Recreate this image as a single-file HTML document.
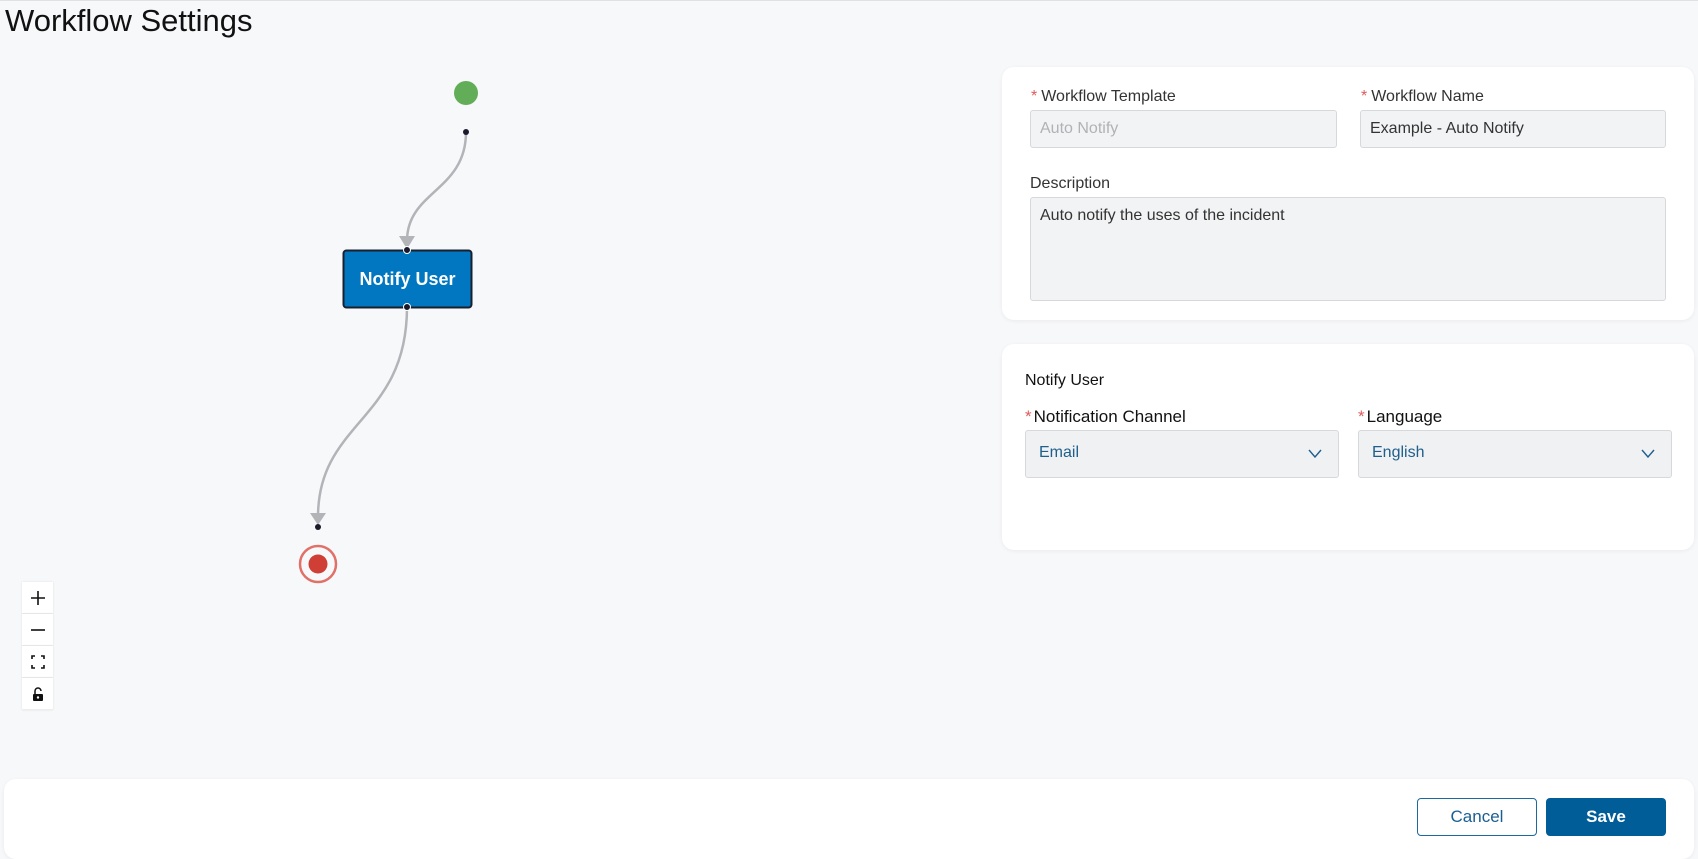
<!DOCTYPE html>
<html><head><style>
*{box-sizing:border-box;margin:0;padding:0}
body{width:1698px;height:840px;background:#f7f8fa;font-family:"Liberation Sans",sans-serif;position:relative;overflow:hidden;border-top:1px solid #dfe1e4;color:#222}
.a{position:absolute}
h1{position:absolute;left:5px;top:2px;font-size:31px;font-weight:400;color:#111}
.card{position:absolute;background:#fff;border-radius:12px;box-shadow:0 1px 4px rgba(0,0,0,0.06)}
.lbl{position:absolute;font-size:16px;color:#333}
.lbl b{color:#e05a5a;font-weight:400;margin-right:4px}
.inp{position:absolute;background:#f2f3f5;border:1px solid #d6d8db;border-radius:3px;font-size:16px;color:#333;padding:9px 9px}
.sel{position:absolute;background:#f0f1f3;border:1px solid #d6d8db;border-radius:3px;font-size:16px;color:#1e5f8c;padding:13px 13px}
.ctl{position:absolute;left:22px;width:31px;height:32px;background:#fff;border-bottom:1px solid #eee;box-shadow:0 0 2px rgba(0,0,0,0.1);display:flex;align-items:center;justify-content:center}
.btn{position:absolute;top:797px;width:120px;height:38px;border-radius:4px;font-size:17px;display:flex;align-items:center;justify-content:center}
</style></head><body>
<h1>Workflow Settings</h1>
<svg class="a" style="left:0;top:0" width="900" height="720">
<circle cx="466" cy="92" r="12" fill="#62ad58"/>
<path d="M466 131 C466 190 407 190 407 240" stroke="#b3b4b8" stroke-width="2.5" fill="none"/>
<path d="M399 235 L415 235 L407 248 Z" fill="#b3b4b8"/>
<path d="M407 306 C407 420 318 420 318 516" stroke="#b3b4b8" stroke-width="2.5" fill="none"/>
<path d="M310 512 L326 512 L318 524 Z" fill="#b3b4b8"/>
<circle cx="466" cy="131" r="3" fill="#1a1a2a"/>
<circle cx="318" cy="526" r="3" fill="#1a1a2a"/>
<circle cx="318" cy="563" r="18" fill="none" stroke="#e07068" stroke-width="2.5"/>
<circle cx="318" cy="563" r="9.5" fill="#cf3f35"/>
<rect x="343.5" y="249.5" width="128" height="57" rx="3" fill="#0077c0" stroke="#1a1f2e" stroke-width="2"/>
<text x="407.5" y="284" text-anchor="middle" font-family="Liberation Sans" font-weight="700" font-size="18" fill="#fff">Notify User</text>
<circle cx="407" cy="249" r="3.5" fill="#1a1a2a" stroke="#fff" stroke-width="1"/>
<circle cx="407" cy="306" r="3.5" fill="#1a1a2a" stroke="#fff" stroke-width="1"/>
</svg>
<div class="ctl" style="top:581px"><svg width="16" height="16"><path d="M8 1V15M1 8H15" stroke="#111" stroke-width="1.6"/></svg></div>
<div class="ctl" style="top:613px"><svg width="16" height="16"><path d="M1 8H15" stroke="#111" stroke-width="1.6"/></svg></div>
<div class="ctl" style="top:645px"><svg width="16" height="16"><path d="M2 5V2H5M11 2H14V5M14 11V14H11M5 14H2V11" stroke="#111" stroke-width="1.6" fill="none"/></svg></div>
<div class="ctl" style="top:677px"><svg width="16" height="16"><path d="M5 8V5a3 3 0 0 1 6 0" stroke="#111" stroke-width="1.5" fill="none"/><rect x="3" y="8" width="10" height="7" rx="1" fill="#111"/><circle cx="8" cy="11.5" r="1.2" fill="#fff"/></svg></div>

<div class="card" style="left:1002px;top:66px;width:692px;height:253px"></div>
<div class="lbl" style="left:1031px;top:87px"><b>*</b>Workflow Template</div>
<div class="lbl" style="left:1361px;top:87px"><b>*</b>Workflow Name</div>
<div class="inp" style="left:1030px;top:109px;width:307px;height:38px;color:#b0b2b5">Auto Notify</div>
<div class="inp" style="left:1360px;top:109px;width:306px;height:38px">Example - Auto Notify</div>
<div class="lbl" style="left:1030px;top:174px">Description</div>
<div class="inp" style="left:1030px;top:196px;width:636px;height:104px">Auto notify the uses of the incident</div>

<div class="card" style="left:1002px;top:343px;width:692px;height:206px"></div>
<div class="lbl" style="left:1025px;top:371px;color:#111">Notify User</div>
<div class="lbl" style="left:1025px;top:406px;font-size:17px;color:#111"><b style="margin-right:2px">*</b>Notification Channel</div>
<div class="lbl" style="left:1358px;top:406px;font-size:17px;color:#111"><b style="margin-right:2px">*</b>Language</div>
<div class="sel" style="left:1025px;top:429px;width:314px;height:48px">Email<svg class="a" style="right:16px;top:18px" width="14" height="9"><path d="M1 1L7 8L13 1" stroke="#1e5f8c" stroke-width="1.4" fill="none"/></svg></div>
<div class="sel" style="left:1358px;top:429px;width:314px;height:48px">English<svg class="a" style="right:16px;top:18px" width="14" height="9"><path d="M1 1L7 8L13 1" stroke="#1e5f8c" stroke-width="1.4" fill="none"/></svg></div>

<div class="card" style="left:4px;top:778px;width:1690px;height:80px;border-radius:12px"></div>
<div class="btn" style="left:1417px;border:1px solid #1a6aa0;color:#1a5f92;background:#fff">Cancel</div>
<div class="btn" style="left:1546px;background:#005d98;color:#fff;font-weight:700">Save</div>
</body></html>
